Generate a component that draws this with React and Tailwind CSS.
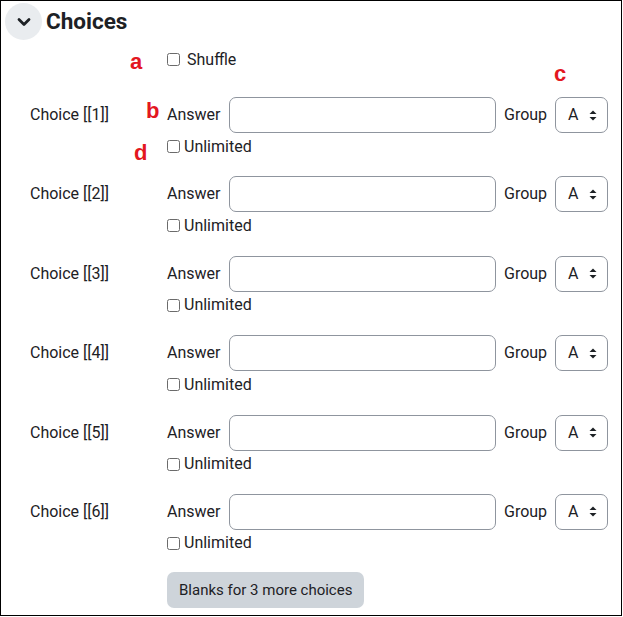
import React from 'react';

const font = { fontFamily: 'Roboto, "Liberation Sans", sans-serif' };

const Checkbox = () => (
  <span className="inline-block w-[13px] h-[13px] border border-[#6b6b6b] rounded-[2.5px] bg-white shrink-0" />
);

const SelectArrows = () => (
  <svg width="8" height="11" viewBox="0 0 8 11" className="shrink-0">
    <path d="M4 0.5 L7.5 4 L0.5 4 Z" fill="#1d2125" />
    <path d="M4 10.5 L7.5 7 L0.5 7 Z" fill="#1d2125" />
  </svg>
);

const ChoiceRow = ({ n }) => (
  <div className="flex h-[79.4px]">
    <div className="w-[137px] h-[36px] flex items-center text-[16px]">Choice [[{n}]]</div>
    <div className="flex flex-col">
      <div className="flex items-center h-[36px]">
        <span className="text-[16px] w-[62px]">Answer</span>
        <div className="w-[267px] h-[36px] border border-[#8f959e] rounded-[7px] bg-white" />
        <span className="text-[16px] ml-[8px] w-[51px]">Group</span>
        <div className="w-[53px] h-[36px] border border-[#8f959e] rounded-[7px] bg-white flex items-center pl-[12px] gap-[11px]">
          <span className="text-[16px]">A</span>
          <SelectArrows />
        </div>
      </div>
      <div className="flex items-center h-[19px] mt-[4px] gap-[4px]">
        <Checkbox />
        <span className="text-[16px]">Unlimited</span>
      </div>
    </div>
  </div>
);

const Mark = ({ children, className }) => (
  <span
    className={`absolute text-[22px] font-bold text-[#e3171f] leading-none ${className}`}
    style={{ fontFamily: '"Liberation Sans", Arial, sans-serif' }}
  >
    {children}
  </span>
);

export default function App() {
  return (
    <div className="w-[623px] h-[617px] bg-white" style={font}>
      <div className="relative w-[622px] h-[616px] border border-black text-[#1d2125]">
        {/* Section header */}
        <div className="flex items-center pl-[4px] pt-[2px]">
          <div className="w-[37px] h-[37px] rounded-full bg-[#e9ecef] flex items-center justify-center">
            <svg width="14" height="10" viewBox="0 0 14 10">
              <path d="M2 2.5 L7 7.5 L12 2.5" fill="none" stroke="#1d2125" strokeWidth="2.8" strokeLinecap="round" strokeLinejoin="round" />
            </svg>
          </div>
          <h3 className="text-[22.5px] font-bold ml-[4px] leading-none">Choices</h3>
        </div>

        {/* Shuffle */}
        <div className="flex items-center h-[19px] mt-[10px] pl-[166px] gap-[7px]">
          <Checkbox />
          <span className="text-[16px]">Shuffle</span>
        </div>

        <div className="pl-[29px] mt-[28px]">
          {[1, 2, 3, 4, 5, 6].map((n) => (
            <ChoiceRow key={n} n={n} />
          ))}
          <div className="pl-[137px] -mt-[1px]">
            <button className="h-[36px] px-[12px] rounded-[7px] bg-[#ced4da] text-[15px] text-[#1d2125]">
              Blanks for 3 more choices
            </button>
          </div>
        </div>

        <Mark className="left-[129px] top-[50px]">a</Mark>
        <Mark className="left-[145px] top-[99px]">b</Mark>
        <Mark className="left-[553px] top-[62px]">c</Mark>
        <Mark className="left-[133px] top-[141px]">d</Mark>
      </div>
    </div>
  );
}
